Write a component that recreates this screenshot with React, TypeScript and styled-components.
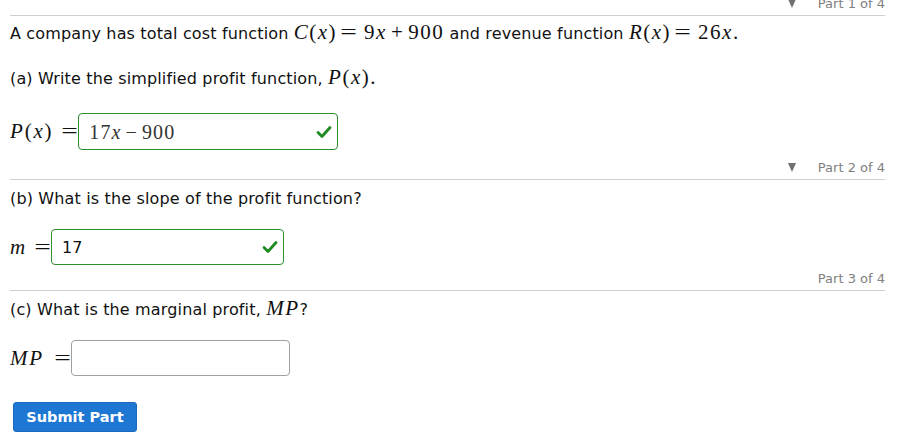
import React from 'react';
import styled, { createGlobalStyle } from 'styled-components';

const GlobalStyle = createGlobalStyle`
  body {
    margin: 0;
    background: #fff;
    font-family: 'DejaVu Sans', Tahoma, Verdana, sans-serif;
    color: #111;
  }
`;

const Page = styled.div`
  width: 875px;
  margin: -5px 0 0 10px;
  overflow: hidden;
`;

const PartHeader = styled.div`
  display: flex;
  justify-content: flex-end;
  align-items: center;
  gap: 22px;
  height: 16px;
  padding-bottom: 4px;
  border-bottom: 1px solid #cfcfcf;
  font-size: 13px;
  color: #808080;
`;

const Triangle = styled.span`
  width: 0;
  height: 0;
  border-left: 4.5px solid transparent;
  border-right: 4.5px solid transparent;
  border-top: 9px solid #707070;
`;

const Text = styled.p<{ $top: number }>`
  margin: ${(p) => p.$top}px 0 0;
  font-size: 16px;
  line-height: 24px;
  letter-spacing: 0.15px;
`;

const M = styled.span`
  font-family: 'Liberation Serif', 'Times New Roman', serif;
  font-size: 21px;
  line-height: 1;
  letter-spacing: 1.5px;
`;

const V = styled.i`
  font-family: 'Liberation Serif', 'Times New Roman', serif;
  font-style: italic;
`;

const Op = styled.span<{ $s: number }>`
  margin: 0 ${(p) => p.$s}px;
`;

// wide equals sign, closer to the TeX one
const Eq = styled.span<{ $l: number; $r: number }>`
  display: inline-block;
  width: 17px;
  margin: 0 ${(p) => p.$r}px 0 ${(p) => p.$l}px;
  text-align: center;
  letter-spacing: 0;
  transform: scaleX(1.4);
`;

const AnswerRow = styled.div<{ $top: number; $bottom: number }>`
  display: flex;
  align-items: center;
  margin: ${(p) => p.$top}px 0 ${(p) => p.$bottom}px;
`;

const Label = styled.span`
  font-family: 'Liberation Serif', 'Times New Roman', serif;
  font-size: 21px;
  line-height: 1;
  letter-spacing: 1.8px;
  white-space: pre;
`;

const Field = styled.div<{ $w: number; $h: number; $ok?: boolean }>`
  position: relative;
  box-sizing: border-box;
  width: ${(p) => p.$w}px;
  height: ${(p) => p.$h}px;
  border: 1px solid ${(p) => (p.$ok ? '#2f8f2f' : '#a0a0a0')};
  border-radius: 4px;
  display: flex;
  align-items: center;
  padding-left: 10px;
`;

const MathValue = styled.span`
  font-family: 'Liberation Serif', 'Times New Roman', serif;
  font-size: 20px;
  line-height: 1;
  letter-spacing: 1.1px;
  color: #333;
`;

const PlainValue = styled.span`
  font-size: 16px;
  color: #111;
`;

const Check = styled.svg`
  position: absolute;
  right: 5px;
  top: 50%;
  transform: translateY(-50%);
`;

const SubmitButton = styled.button`
  display: block;
  margin: 26px 0 0 3px;
  width: 124px;
  height: 30px;
  background: #1f77d4;
  border: 1px solid #1a6bc0;
  border-radius: 3px;
  color: #fff;
  font-family: 'DejaVu Sans', Tahoma, Verdana, sans-serif;
  font-weight: bold;
  font-size: 14.5px;
  cursor: pointer;
`;

function CheckMark() {
  return (
    <Check width="16" height="14" viewBox="0 0 16 14">
      <path d="M2 7.5 L6 11.5 L14 2.5" fill="none" stroke="#1f8a1f" strokeWidth="2.8" strokeLinecap="round" strokeLinejoin="round" />
    </Check>
  );
}

export default function App() {
  return (
    <>
      <GlobalStyle />
      <Page>
        <PartHeader>
          <Triangle />
          <span>Part 1 of 4</span>
        </PartHeader>
        <Text $top={6}>
          A company has total cost function{' '}
          <M>
            <V>C</V>(<V>x</V>)<Eq $l={3} $r={7}>=</Eq>9<V>x</V><Op $s={4}>+</Op>900
          </M>{' '}
          and revenue function{' '}
          <M>
            <V>R</V>(<V>x</V>)<Eq $l={3} $r={7}>=</Eq>26<V>x</V>.
          </M>
        </Text>
        <Text $top={21}>
          (a) Write the simplified profit function,{' '}
          <M>
            <V>P</V>(<V>x</V>).
          </M>
        </Text>
        <AnswerRow $top={22} $bottom={9}>
          <Label>
            <V>P</V>(<V>x</V>)<Eq $l={8} $r={0}>=</Eq>
          </Label>
          <Field $w={260} $h={37} $ok>
            <MathValue>
              17<V>x</V>
              <Op $s={4}>−</Op>900
            </MathValue>
            <CheckMark />
          </Field>
        </AnswerRow>

        <PartHeader>
          <Triangle />
          <span>Part 2 of 4</span>
        </PartHeader>
        <Text $top={7}>(b) What is the slope of the profit function?</Text>
        <AnswerRow $top={18} $bottom={5}>
          <Label>
            <V>m</V>
            <Eq $l={7} $r={0}>=</Eq>
          </Label>
          <Field $w={233} $h={36} $ok>
            <PlainValue>17</PlainValue>
            <CheckMark />
          </Field>
        </AnswerRow>

        <PartHeader>
          <span>Part 3 of 4</span>
        </PartHeader>
        <Text $top={7}>
          (c) What is the marginal profit,{' '}
          <M>
            <V>MP</V>
          </M>
          ?
        </Text>
        <AnswerRow $top={18} $bottom={0}>
          <Label>
            <V>MP</V>
            <Eq $l={10} $r={0}>=</Eq>
          </Label>
          <Field $w={219} $h={36} />
        </AnswerRow>
        <SubmitButton>Submit Part</SubmitButton>
      </Page>
    </>
  );
}
